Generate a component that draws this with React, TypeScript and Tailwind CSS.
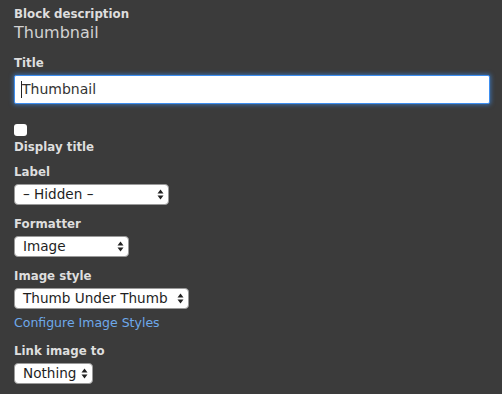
import type { ReactNode } from "react";

function Arrows() {
  return (
    <svg width="7" height="11" viewBox="0 0 7 11" className="shrink-0">
      <path d="M3.5 0.5 L6.5 4.5 L0.5 4.5 Z" fill="#222" />
      <path d="M3.5 10.5 L6.5 6.5 L0.5 6.5 Z" fill="#222" />
    </svg>
  );
}

function Select({ value, width }: { value: string; width: string }) {
  return (
    <div
      className={`mt-1 flex h-[21px] items-center justify-between rounded-[4px] border border-[#9a9a9a] bg-white pl-[8px] pr-[4px] text-[13.6px] leading-none text-[#1e1e1e] ${width}`}
    >
      <span>{value}</span>
      <Arrows />
    </div>
  );
}

function Label({ children, className = "" }: { children: ReactNode; className?: string }) {
  return <div className={`text-[11.8px] font-bold leading-[16px] text-[#dedede] ${className}`}>{children}</div>;
}

export default function App() {
  return (
    <div
      className="h-[394px] w-[502px] bg-[#3b3b3b] pl-[14px] pt-[6px]"
      style={{ fontFamily: '"DejaVu Sans", "Liberation Sans", sans-serif' }}
    >
      <Label>Block description</Label>
      <div className="mt-px text-[16px] leading-[20px] text-[#d2d2d2]">Thumbnail</div>

      <Label className="mt-3">Title</Label>
      <div className="mt-1 mr-[12px] flex h-[29px] items-center rounded-[2px] border border-[#3d8ef0] bg-white pl-[6px] text-[14px] text-[#333] shadow-[0_0_4px_1px_rgba(60,150,255,0.55)]">
        <span className="h-[17px] w-px bg-[#222]" />
        Thumbnail
      </div>

      <div className="mt-5 h-[12px] w-[13px] rounded-[3px] bg-white" />
      <Label className="mt-[3px]">Display title</Label>

      <Label className="mt-[9px]">Label</Label>
      <Select value="– Hidden –" width="w-[155px]" />

      <Label className="mt-[11px]">Formatter</Label>
      <Select value="Image" width="w-[115px]" />

      <Label className="mt-[11px]">Image style</Label>
      <Select value="Thumb Under Thumb" width="w-[175px]" />
      <div className="mt-[6px] text-[12.5px] leading-[16px] text-[#6ea9ea]">Configure Image Styles</div>

      <Label className="mt-3">Link image to</Label>
      <Select value="Nothing" width="w-[79px]" />
    </div>
  );
}
